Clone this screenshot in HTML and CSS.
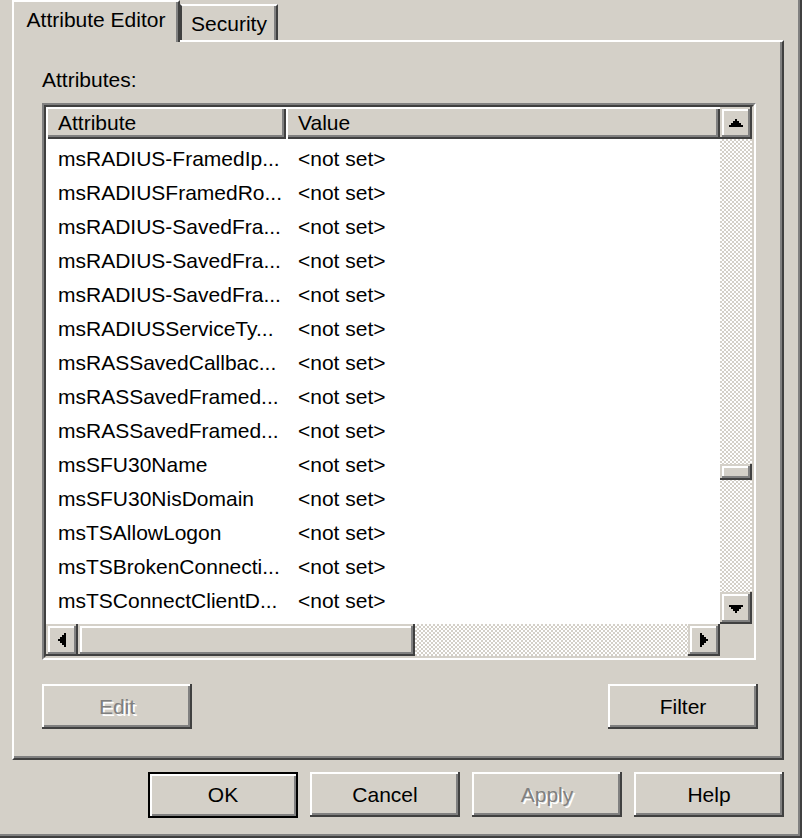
FILE: index.html
```html
<!DOCTYPE html>
<html lang="en">
<head>
<meta charset="utf-8">
<title>Attribute Editor</title>
<link rel="stylesheet" href="styles.css">
</head>
<body>
<div class="window">
  <div class="tabs">
    <div class="tab tab-active">Attribute Editor</div>
    <div class="tab tab-inactive">Security</div>
  </div>
  <div class="panel">
    <div class="label">Attributes:</div>
    <div class="listview">
      <div class="listview-inner">
        <div class="list-main">
          <div class="header">
            <div class="hcell col-attr">Attribute</div>
            <div class="hcell col-val">Value</div>
          </div>
          <div class="rows">
            <div class="row"><span class="cell col-attr">msRADIUS-FramedIp...</span><span class="cell col-val">&lt;not set&gt;</span></div>
            <div class="row"><span class="cell col-attr">msRADIUSFramedRo...</span><span class="cell col-val">&lt;not set&gt;</span></div>
            <div class="row"><span class="cell col-attr">msRADIUS-SavedFra...</span><span class="cell col-val">&lt;not set&gt;</span></div>
            <div class="row"><span class="cell col-attr">msRADIUS-SavedFra...</span><span class="cell col-val">&lt;not set&gt;</span></div>
            <div class="row"><span class="cell col-attr">msRADIUS-SavedFra...</span><span class="cell col-val">&lt;not set&gt;</span></div>
            <div class="row"><span class="cell col-attr">msRADIUSServiceTy...</span><span class="cell col-val">&lt;not set&gt;</span></div>
            <div class="row"><span class="cell col-attr">msRASSavedCallbac...</span><span class="cell col-val">&lt;not set&gt;</span></div>
            <div class="row"><span class="cell col-attr">msRASSavedFramed...</span><span class="cell col-val">&lt;not set&gt;</span></div>
            <div class="row"><span class="cell col-attr">msRASSavedFramed...</span><span class="cell col-val">&lt;not set&gt;</span></div>
            <div class="row"><span class="cell col-attr">msSFU30Name</span><span class="cell col-val">&lt;not set&gt;</span></div>
            <div class="row"><span class="cell col-attr">msSFU30NisDomain</span><span class="cell col-val">&lt;not set&gt;</span></div>
            <div class="row"><span class="cell col-attr">msTSAllowLogon</span><span class="cell col-val">&lt;not set&gt;</span></div>
            <div class="row"><span class="cell col-attr">msTSBrokenConnecti...</span><span class="cell col-val">&lt;not set&gt;</span></div>
            <div class="row"><span class="cell col-attr">msTSConnectClientD...</span><span class="cell col-val">&lt;not set&gt;</span></div>
          </div>
        </div>
        <div class="vscroll">
          <div class="sbtn"><svg width="14" height="8" viewBox="0 0 14 8" shape-rendering="crispEdges"><path d="M6 0h2v2h2v2h2v2h2v2H0V6h2V4h2V2h2z" fill="#000"/></svg></div>
          <div class="track"><div class="thumb vthumb"></div></div>
          <div class="sbtn sbtn-down"><svg width="14" height="8" viewBox="0 0 14 8" shape-rendering="crispEdges"><path d="M0 0h14v2h-2v2h-2v2H8v2H6V6H4V4H2V2H0z" fill="#000"/></svg></div>
        </div>
        <div class="hscroll">
          <div class="sbtn"><svg width="8" height="14" viewBox="0 0 8 14" shape-rendering="crispEdges"><path d="M6 0h2v14H6v-2H4v-2H2V8H0V6h2V4h2V2h2z" fill="#000"/></svg></div>
          <div class="thumb hthumb"></div>
          <div class="track"></div>
          <div class="sbtn"><svg width="8" height="14" viewBox="0 0 8 14" shape-rendering="crispEdges"><path d="M0 0h2v2h2v2h2v2h2v2H6v2H4v2H2v2H0z" fill="#000"/></svg></div>
        </div>
        <div class="corner"></div>
      </div>
    </div>
    <div class="panel-buttons">
      <div class="btn btn-disabled">Edit</div>
      <div class="btn">Filter</div>
    </div>
  </div>
  <div class="dialog-buttons">
    <div class="btn btn-default">OK</div>
    <div class="btn">Cancel</div>
    <div class="btn btn-disabled">Apply</div>
    <div class="btn">Help</div>
  </div>
</div>
</body>
</html>
```
FILE: styles.css
```css
* { box-sizing: border-box; }
html, body { margin: 0; padding: 0; }
body {
  background: #d4d0c8;
  font-family: "Liberation Sans", Arial, sans-serif;
  font-size: 21px;
  line-height: 24px;
  color: #000;
}
.window {
  width: 802px;
  height: 838px;
  overflow: hidden;
  box-shadow: inset -2px -2px 0 #404040, inset -4px -4px 0 #808080;
}
.tabs {
  display: flex;
  align-items: flex-end;
  height: 40px;
  padding-left: 12px;
}
.tab {
  height: 36px;
  padding-top: 6px;
  text-align: center;
  white-space: nowrap;
  background: #d4d0c8;
  border-top: 2px solid #fff;
}
.tab-active {
  position: relative;
  z-index: 1;
  width: 168px;
  height: 42px;
  margin-bottom: -2px;
  border-left: 2px solid #fff;
  border-right: 2px solid #404040;
  box-shadow: inset -2px 0 0 #808080;
}
.tab-inactive {
  width: 98px;
  border-left: 2px solid #404040;
  border-right: 2px solid #404040;
  box-shadow: inset -2px 0 0 #808080;
}
.panel {
  margin-left: 12px;
  width: 772px;
  height: 720px;
  border: 2px solid;
  border-color: #fff #404040 #404040 #fff;
  box-shadow: inset -2px -2px 0 #808080;
  padding: 26px 24px 0 28px;
}
.label { height: 24px; }
.listview {
  margin-top: 11px;
  width: 714px;
  height: 557px;
  border: 2px solid;
  border-color: #808080 #fff #fff #808080;
}
.listview-inner {
  height: 100%;
  border: 2px solid;
  border-color: #404040 #d4d0c8 #d4d0c8 #404040;
  display: grid;
  grid-template-columns: 1fr 32px;
  grid-template-rows: 1fr 32px;
}
.list-main {
  background: #fff;
  overflow: hidden;
}
.header {
  display: flex;
  height: 32px;
  background: #d4d0c8;
}
.hcell {
  height: 32px;
  padding: 4px 0 0 12px;
  white-space: nowrap;
  overflow: hidden;
  box-shadow: inset 2px 2px 0 #fff, inset -2px -2px 0 #404040, inset -4px -4px 0 #808080;
}
.col-attr { width: 240px; flex: none; }
.col-val { flex: 1; }
.row {
  display: flex;
  height: 34px;
  padding-top: 8px;
  white-space: nowrap;
}
.cell {
  padding-left: 12px;
  overflow: hidden;
}
.vscroll {
  display: flex;
  flex-direction: column;
}
.hscroll { display: flex; }
.sbtn {
  width: 32px;
  height: 32px;
  flex: none;
  display: flex;
  align-items: center;
  justify-content: center;
  background: #d4d0c8;
  box-shadow: inset -2px -2px 0 #404040, inset 2px 2px 0 #d4d0c8, inset -4px -4px 0 #808080, inset 4px 4px 0 #fff;
}
.sbtn svg { display: block; }
.sbtn-down svg { margin-top: 2px; }
.track {
  flex: 1;
  background-color: #fff;
  background-image: conic-gradient(#d4d0c8 0 90deg, #fff 90deg 180deg, #d4d0c8 180deg 270deg, #fff 270deg 360deg);
  background-size: 4px 4px;
}
.thumb {
  background: #d4d0c8;
  box-shadow: inset -2px -2px 0 #404040, inset 2px 2px 0 #d4d0c8, inset -4px -4px 0 #808080, inset 4px 4px 0 #fff;
}
.vthumb {
  margin-top: 325px;
  height: 16px;
}
.hthumb {
  width: 337px;
  flex: none;
}
.corner { background: #d4d0c8; }
.panel-buttons {
  display: flex;
  justify-content: space-between;
  margin-top: 24px;
}
.btn {
  width: 150px;
  height: 45px;
  display: flex;
  align-items: center;
  justify-content: center;
  background: #d4d0c8;
  box-shadow: inset -2px -2px 0 #404040, inset 2px 2px 0 #fff, inset -4px -4px 0 #808080;
}
.btn-disabled {
  color: #808080;
  text-shadow: 2px 2px 0 #fff;
}
.btn-default {
  height: 46px;
  border: 2px solid #000;
  box-shadow: inset 2px 2px 0 #fff, inset -2px -2px 0 #808080;
}
.dialog-buttons {
  display: flex;
  justify-content: flex-end;
  gap: 12px;
  margin-top: 12px;
  padding-right: 18px;
}
```
